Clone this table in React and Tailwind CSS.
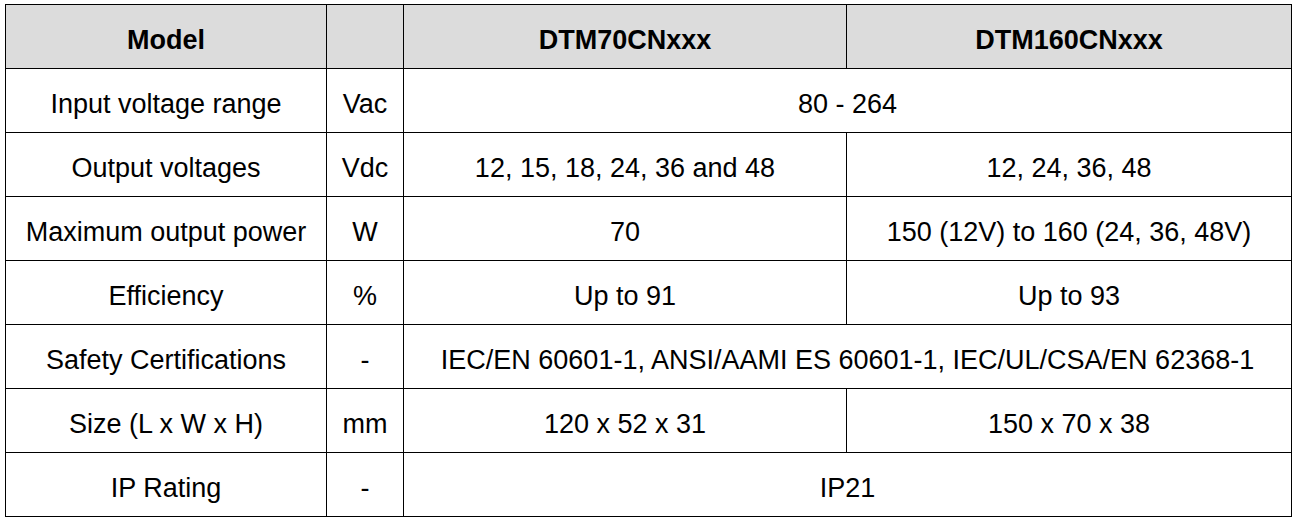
export default function App() {
    const rows = [
        ["Input voltage range", "Vac", "80 - 264"],
        ["Output voltages", "Vdc", "12, 15, 18, 24, 36 and 48", "12, 24, 36, 48"],
        ["Maximum output power", "W", "70", "150 (12V) to 160 (24, 36, 48V)"],
        ["Efficiency", "%", "Up to 91", "Up to 93"],
        ["Safety Certifications", "-", "IEC/EN 60601-1, ANSI/AAMI ES 60601-1, IEC/UL/CSA/EN 62368-1"],
        ["Size (L x W x H)", "mm", "120 x 52 x 31", "150 x 70 x 38"],
        ["IP Rating", "-", "IP21"],
    ];

    const cell = "border border-black text-center align-middle pt-[7px] pb-0 px-0";

    return (
        <div className="bg-white w-[1296px] h-[521px] pl-[5px] pt-[4px] font-['Liberation_Sans',Arial,sans-serif] text-[27px] leading-[32px] text-black">
            <table className="border-collapse table-fixed w-[1286px]">
                <colgroup>
                    <col className="w-[321px]" />
                    <col className="w-[77px]" />
                    <col className="w-[443px]" />
                    <col className="w-[445px]" />
                </colgroup>
                <thead>
                    <tr className="h-[64px] bg-[#dcdcdc] font-bold">
                        <th className={cell}>Model</th>
                        <th className={cell}></th>
                        <th className={cell}>DTM70CNxxx</th>
                        <th className={cell}>DTM160CNxxx</th>
                    </tr>
                </thead>
                <tbody>
                    {rows.map((r, i) => (
                        <tr key={i} className="h-[64px]">
                            <td className={cell}>{r[0]}</td>
                            <td className={cell}>{r[1]}</td>
                            {r.length === 3 ? (
                                <td className={cell} colSpan={2}>{r[2]}</td>
                            ) : (
                                <>
                                    <td className={cell}>{r[2]}</td>
                                    <td className={cell}>{r[3]}</td>
                                </>
                            )}
                        </tr>
                    ))}
                </tbody>
            </table>
        </div>
    )
}
